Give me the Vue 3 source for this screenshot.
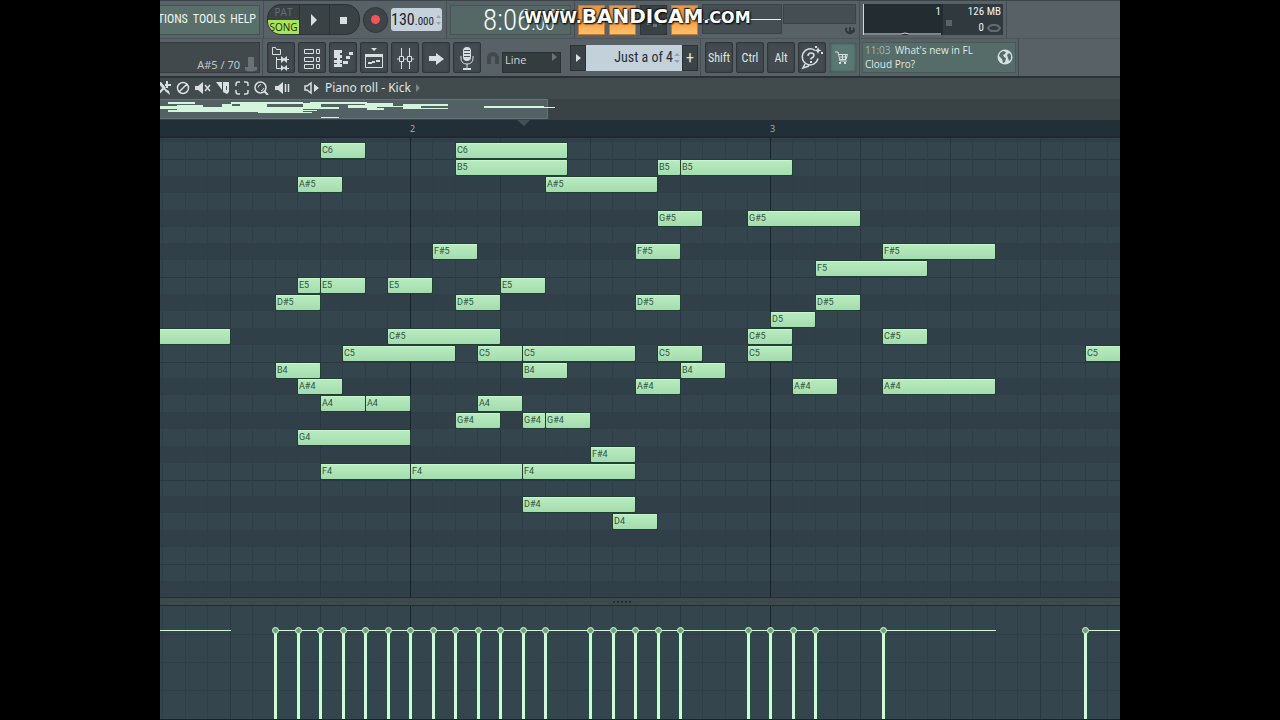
<script setup>
const STEP = 22.5
const ORIGIN = 116
const ROW = 16.87
const NAMES = ['C', 'B', 'A#', 'A', 'G#', 'G', 'F#', 'F', 'E', 'D#', 'D', 'C#']

const score = [
  ['C6', [[2, 2], [8, 5]]],
  ['B5', [[8, 5], [17, 1], [18, 5]]],
  ['A#5', [[1, 2], [12, 5]]],
  ['G#5', [[17, 2], [21, 5]]],
  ['F#5', [[7, 2], [16, 2], [27, 5]]],
  ['F5', [[24, 5]]],
  ['E5', [[1, 1], [2, 2], [5, 2], [10, 2]]],
  ['D#5', [[0, 2], [8, 2], [16, 2], [24, 2]]],
  ['D5', [[22, 2]]],
  ['C#5', [[-7, 5], [5, 5], [21, 2], [27, 2]]],
  ['C5', [[3, 5], [9, 2], [11, 5], [17, 2], [21, 2], [36, 5]]],
  ['B4', [[0, 2], [11, 2], [18, 2]]],
  ['A#4', [[1, 2], [16, 2], [23, 2], [27, 5]]],
  ['A4', [[2, 2], [4, 2], [9, 2]]],
  ['G#4', [[8, 2], [11, 1], [12, 2]]],
  ['G4', [[1, 5]]],
  ['F#4', [[14, 2]]],
  ['F4', [[2, 4], [6, 5], [11, 5]]],
  ['D#4', [[11, 5]]],
  ['D4', [[15, 2]]],
]

const stepX = (k) => Math.floor(ORIGIN + k * STEP)
const rowOf = (name) => {
  const octave = Number(name.slice(-1))
  const i = NAMES.indexOf(name.slice(0, -1))
  return (octave === 6 ? 0 : (5 - octave) * 12 + i) + (octave < 6 && i === 0 ? 12 : 0)
}
const notes = score.flatMap(([name, list]) =>
  list.map(([k, len]) => ({
    name: k < -5 ? '' : name,
    key: name + k,
    style: {
      left: stepX(k) + 'px',
      top: Math.round(5.2 + rowOf(name) * ROW) + 'px',
      width: stepX(k + len) - stepX(k) - 1 + 'px',
    },
  }))
)

const rows = Array.from({ length: 28 }, (_, n) => {
  const i = n - 1
  const name = NAMES[(i + 12) % 12]
  return {
    y: Math.round(4.2 + i * ROW),
    dark: name.includes('#'),
    edge: name === 'B' || name === 'E',
  }
})
const lines = Array.from({ length: 100 }, (_, n) => {
  const k = n - 5
  const kind = (k - 6) % 16 === 0 ? 'measure' : (k - 2) % 4 === 0 ? 'beat' : 'sub'
  return { x: stepX(k) - 0.5, kind }
})
const sticks = [0, 1, 2, 3, 4, 5, 6, 7, 8, 9, 10, 11, 12, 14, 15, 16, 17, 18, 21, 22, 23, 24, 27, 36].map((k) => Math.ceil(ORIGIN + k * STEP))
const sustains = [[-7, -2], [0, 32], [36, 41]].map(([a, b]) => [stepX(a), stepX(b)])

const overview = [
  [8, 1, 27, 2], [0, 5, 17, 3], [8, 9, 10, 2], [17, 4, 26, 4], [17, 9, 36, 2], [17, 8, 90, 1], [35, 4, 8, 3],
  [43, 6, 40, 3], [53, 9, 45, 2], [62, 3, 10, 3], [71, 1, 72, 2], [80, 3, 27, 4], [71, 5, 30, 3],
  [98, 6, 45, 3], [98, 9, 45, 2], [98, 11, 54, 1], [143, 2, 18, 6], [143, 9, 14, 1], [150, 1, 57, 2],
  [161, 6, 18, 2], [188, 4, 29, 3], [205, 2, 28, 2], [215, 4, 18, 2], [207, 7, 17, 2], [233, 5, 10, 1],
  [243, 3, 45, 2], [243, 5, 18, 2], [243, 7, 45, 1], [161, 16, 18, 1], [324, 6, 71, 1], [324, 5, 60, 2],
]
</script>

<template>
  <main class="screen">
    <div class="app">
      <header class="toolbar">
        <div class="bar">
          <nav class="menu">
            <button>OPTIONS</button><button>TOOLS</button><button>HELP</button>
          </nav>
          <i class="rule"></i>
          <div class="transport">
            <button class="mode"><span>PAT</span><b>SONG</b></button>
            <button aria-label="Play"><svg width="28" height="30"><path d="M10 9l6 6-6 6z" /></svg></button>
            <button aria-label="Stop"><svg width="28" height="30"><path d="M9 12h7v7h-7z" /></svg></button>
          </div>
          <button class="record" aria-label="Record"><i></i></button>
          <button class="tempo" aria-label="Tempo"><span>130</span><small>.000</small>
            <svg width="7" height="12"><path d="M1 4l2.500-3 2.500 3zM1 8l2.500 3 2.500-3z" /></svg>
          </button>
          <i class="rule"></i>
          <div class="clock"><span>8:06</span><small>:00</small><em>B:S:T</em></div>
          <i class="rule"></i>
          <div class="toggles">
            <button class="lit" aria-label="Typing keyboard"><svg width="26" height="29"><path d="M4 16h18v3h-18z" /></svg></button>
            <button class="lit" aria-label="Countdown"><svg width="26" height="29"><path d="M11 16h4v4h-4z" /></svg></button>
            <button aria-label="Wait for input"><svg width="26" height="29"><path d="M6 17h4v3h-4zM12 19h4v3h-4zM18 17h3v3h-3z" /></svg></button>
            <button class="lit" aria-label="Loop record"><svg width="26" height="29"><path d="M7 16h4v3h-4zM15 16h4v3h-4z" /></svg></button>
          </div>
          <div class="scopes">
            <div class="scope"><i></i></div>
            <div class="side"><div class="meter"></div>
              <svg width="12" height="9"><path class="ln" d="M3 2a4 3 0 1 0 6 0M6 1v4h4" /></svg>
            </div>
          </div>
          <i class="rule"></i>
          <div class="stats">
            <div class="cpu"><span>1</span><svg width="80" height="3"><path class="ln" d="M0 2h40l4-1 4 1h32" /></svg></div>
            <div class="mem"><span>126 MB</span>
              <div><i></i><span>0</span><svg width="14" height="10"><path class="ln" d="M1 5c2-4 4-3 6-3s4-1 6 3c-2 4-4 3-6 3s-4 1-6-3z" /></svg></div>
            </div>
          </div>
          <i class="rule"></i>
        </div>

        <div class="bar second">
          <div class="hint"><span>A#5 / 70</span>
            <svg width="14" height="16"><path d="M4 1h6v10h3v3q-6 3-12 0v-3h3z" /></svg>
          </div>
          <i class="rule"></i>
          <div class="windows main">
            <button aria-label="Browser"><svg width="28" height="30"><path class="ln" d="M5.500 11.500v-7h3l1 2h4v5zM9.500 14v11.500M9.500 16.500h5M9.500 25.500h5" /><path d="M14 13l3 2.500 3-2.500v7l-3-2.500-3 2.500zM14 22l3 2.500 3-2.500v6l-3-2.500-3 2.500zM20 16h2v1h-2zM20 25h2v1h-2z" /></svg></button>
            <button aria-label="Channel rack"><svg width="28" height="30"><path class="ln" d="M6.500 6.500h9v4h-9zM6.500 14.500h9v4h-9zM6.500 21.500h9v4h-9zM18.500 6.500h3v4h-3zM18.500 14.500h3v4h-3zM18.500 21.500h3v4h-3z" /></svg></button>
            <button aria-label="Piano roll"><svg width="28" height="30"><path d="M5 7h8v3h-2v2h2v3h-2v2h2v3h-2v1h2v3h-8v-3h3v-1h-3v-3h3v-2h-3zM14 18h5v3h-5zM17 13h4v3h-4zM20 9h4v3h-4z" /></svg></button>
            <button aria-label="Playlist"><svg width="28" height="30"><path class="ln" d="M5.500 11.500h17v13h-17z" /><path d="M11 5h6l-3 3zM5 11h18v3h-18zM8 19h4v2h-4zM12 18h3v2h-3zM16 17h4v2h-4z" /></svg></button>
            <button aria-label="Mixer"><svg width="28" height="30"><path class="ln" d="M10.500 5v8M10.500 18v8M18.500 5v8M18.500 18v8M8.500 13.500h4v5h-4zM16.500 13.500h4v5h-4zM6 16h2M13 16h3M21 16h2" /></svg></button>
            <button aria-label="Plugin"><svg width="28" height="30"><path d="M7 13h7v-3l8 6-8 6v-4h-7z" /></svg></button>
            <button aria-label="Microphone"><svg width="28" height="30"><rect x="10" y="4" width="8" height="14" rx="4" /><path class="ln" d="M8 13v2q0 6 6 6t6-6v-2M14 21v5" /><path d="M10 25h8v2h-8z" /><path class="cut" d="M11 7.500h6M11 10.500h6M11 13.500h6" /></svg></button>
          </div>
          <svg class="magnet" width="14" height="16"><path d="M1 14v-6a6 6 0 0 1 12 0v6h-4v-6a2 2 0 0 0-4 0v6z" /></svg>
          <div class="snap">
            <select aria-label="Snap"><option>Line</option></select>
            <svg width="5" height="8"><path d="M0 0l5 4-5 4z" /></svg>
          </div>
          <div class="pattern">
            <button aria-label="Pattern menu"><svg width="5" height="8"><path d="M0 0l5 4-5 4z" /></svg></button>
            <input aria-label="Pattern name" value="Just a of 4" />
            <svg class="spin" width="6" height="12"><path d="M0 4l3-3 3 3zM0 8l3 3 3-3z" /></svg>
            <button aria-label="Add pattern">+</button>
          </div>
          <i class="rule"></i>
          <div class="windows keys">
            <button>Shift</button><button>Ctrl</button><button>Alt</button>
            <button aria-label="Help"><svg width="28" height="30"><path class="ln mid" d="M17 7.500a8 8 0 1 0 3 8M7 21l-2 4 6-2" /><path class="ln mid" d="M10 13q0-3 3-3t3 2.500q0 1.500-3 3v1" /><path d="M12 18h2v2h-2zM20 4l1 2.500 2.500 1-2.500 1-1 2.500-1-2.500-2.500-1 2.500-1zM17 3h2v2h-2zM23 9h2v2h-2z" /></svg></button>
            <button class="shop" aria-label="Shop"><svg width="28" height="30"><path class="ln" d="M6 9h3l2 9h7M10 11.500h8.500l-1.500 5h-6M11 14h7M13.500 11v6M16.500 11v6" /><path d="M10 19h2v2h-2zM15 19h2v2h-2z" /></svg></button>
          </div>
          <i class="rule"></i>
          <a class="news" href="#"><span><time>11:03</time> What's new in FL<br />Cloud Pro?</span>
            <svg width="16" height="16"><circle cx="8" cy="8" r="7.500" /><path class="land" d="M3 4l3-2 3 1-1 2-2 1 1 2 2 1-1 4-2 1-1-4-3-3zM10 6l2-2 2 2 0 4-2 2-1-3z" /></svg>
          </a>
          <i class="rule"></i>
        </div>
      </header>

      <section class="roll">
        <div class="tools">
          <button aria-label="Paint"><svg width="14" height="14"><path d="M1 2l3-1 5 6-2 2zM9 0h2v3h3v2h-3v2h-2v-2h-1v-2h1zM7 7l5 3 1 4-5-4z" /><path class="ln thick" d="M2 12l5-5" /></svg></button>
          <button aria-label="Delete"><svg width="14" height="14"><path class="ln mid" d="M3 11l8-8M12.500 7a5.500 5.500 0 1 1-11 0 5.500 5.500 0 0 1 11 0" /></svg></button>
          <button aria-label="Mute"><svg width="16" height="14"><path d="M0 5h3l5-4v12l-5-4h-3z" /><path class="ln mid" d="M10 4l5 6M15 4l-5 6" /></svg></button>
          <button aria-label="Slice"><svg width="14" height="14"><path d="M0 1h6v8zM7 1h6v10l-2 2-4-2z" /><path class="cut" d="M10.500 5v4" /></svg></button>
          <button aria-label="Select"><svg width="14" height="14"><path class="ln mid" d="M1 5v-2q0-2 2-2h2M9 1h2q2 0 2 2v2M13 9v2q0 2-2 2h-2M5 13h-2q-2 0-2-2v-2" /></svg></button>
          <button aria-label="Zoom"><svg width="16" height="14"><circle class="ln mid" cx="6.500" cy="6.500" r="5.500" /><path class="ln" d="M4 6.500q0-2.500 3-3M7 10q2.500-1 3-3" /><path class="ln thick" d="M10 10l4 4" /></svg></button>
          <button aria-label="Playback"><svg width="16" height="14"><path d="M0 5h3l5-4v12l-5-4h-3z" /><path class="ln mid" d="M10.500 3v8M13.500 3v8" /></svg></button>
          <button class="title"><svg width="16" height="14"><path class="ln mid" d="M1 5h2l4-3v10l-4-3h-2z" /><path d="M10 3l5 4-5 4z" /></svg>
            <span>Piano roll - Kick</span>
            <svg class="dim" width="5" height="8"><path d="M0 0l4 4-4 4z" /></svg>
          </button>
        </div>

        <div class="overview">
          <div class="view"></div>
          <svg><rect v-for="(r, i) in overview" :key="i" :x="r[0]" :y="r[1]" :width="r[2]" :height="r[3]" /></svg>
        </div>

        <div class="ruler">
          <svg>
            <path d="M357 0h13l-6 6z" />
            <text x="250" y="12">2</text>
            <text x="610" y="12">3</text>
          </svg>
        </div>

        <div class="grid">
          <svg>
            <g v-for="r in rows" :key="r.y">
              <rect v-if="r.dark" class="dark" x="0" :y="r.y" width="100%" height="17" />
              <rect v-if="r.edge" class="edge" x="0" :y="r.y" width="100%" height="1" />
            </g>
            <line v-for="l in lines" :key="l.x" :class="l.kind" :x1="l.x" :x2="l.x" y1="0" y2="100%" />
          </svg>
          <div v-for="n in notes" :key="n.key" class="note" :style="n.style">{{ n.name }}</div>
        </div>

        <div class="splitter"><i v-for="n in 5" :key="n"></i></div>

        <div class="velocity">
          <svg>
            <line v-for="l in lines" :key="l.x" :class="l.kind" :x1="l.x" :x2="l.x" y1="0" y2="100%" />
            <line v-for="y in [28, 56, 84]" :key="y" class="sub" x1="0" x2="100%" :y1="y + 0.5" :y2="y + 0.5" />
            <g v-for="x in sticks" :key="x">
              <rect class="shade" :x="x - 3" y="24" width="6" height="100%" />
              <rect class="stick" :x="x - 2" y="24" width="3" height="100%" />
            </g>
            <rect v-for="s in sustains" :key="s[0]" class="stick" :x="s[0]" y="24" :width="s[1] - s[0]" height="1" />
            <circle v-for="x in sticks" :key="x" :cx="x - 0.5" cy="24.500" r="3" />
          </svg>
        </div>
      </section>

      <div class="watermark"><small>WWW.</small><b>BANDICAM</b><small>.COM</small></div>
    </div>
  </main>
</template>

<style>
body { background: #000; }
</style>

<style scoped>
* { box-sizing: border-box; }
.screen { height: 100vh; padding: 0 12.5%; background: #000; font-family: "Open Sans", "Noto Sans", sans-serif; overflow: hidden; }
.app { position: relative; display: flex; flex-direction: column; height: 100%; overflow: hidden; background: #34444d; }
button { margin: 0; padding: 0; border: 0; background: none; color: #dfe5e6; font: inherit; display: flex; align-items: center; justify-content: center; }
svg { display: block; flex: none; fill: #d9dfe1; }
.ln { fill: none; stroke: #d9dfe1; stroke-width: 1; }
.mid { stroke-width: 1.5; }
.thick { stroke-width: 2; }
.cut { fill: none; stroke: #4a5358; stroke-width: 1; }

.toolbar { background: #586266; border-bottom: 2px solid #2b3338; flex: none; }
.bar { display: flex; align-items: center; height: 38px; gap: 3px; border-top: 1px solid #3b4448; }
.bar > * { flex: none; }
.rule { width: 1px; align-self: stretch; background: #454e52; }
.menu { width: 100px; height: 30px; display: flex; justify-content: flex-end; gap: 5px; padding-right: 3px; background: #596f6a; border: 1px solid #47534f; border-left: 0; overflow: hidden; }
.menu button, .tempo, .clock, .stats, .pattern, .keys button { font-family: "Roboto Condensed", "Liberation Sans Narrow", "Open Sans", sans-serif; }
.menu button { font-size: 12px; color: #f0f5f4; padding-bottom: 1px; }
.transport { display: flex; width: 93px; height: 31px; border: 1px solid #2b3236; border-radius: 14px; overflow: hidden; background: #3a4246; }
.transport button { width: 30px; border-left: 1px solid #2b3236; }
.transport .mode { width: 31px; border: 0; flex-direction: column; font-size: 10px; line-height: 15px; }
.mode span { color: #687074; }
.mode b { width: 100%; background: #a9e657; color: #1c2a10; font-weight: 400; line-height: 14px; }
.record { width: 25px; height: 26px; border-radius: 13px; background: #3d4549; border: 1px solid #2e3539; }
.record i { width: 9px; height: 9px; border-radius: 5px; background: #f2545c; }
.tempo { width: 51px; height: 23px; border-radius: 3px; background: #c5d2db; color: #1b2429; font-size: 16px; margin-right: 1px; }
.tempo small { font-size: 11px; align-self: flex-end; line-height: 18px; }
.tempo svg { fill: #98a4ab; margin-left: 1px; }
.clock { position: relative; width: 121px; height: 30px; display: flex; align-items: baseline; padding-left: 32px; background: #556865; border: 1px solid #465552; color: #f4faf9; font-size: 29px; font-weight: 300; line-height: 28px; }
.clock small { font-size: 20px; }
.clock em { position: absolute; left: 100px; top: 1px; font: 6px/8px "Open Sans", sans-serif; }
.toggles { display: flex; gap: 4px; width: 120px; }
.toggles button { width: 27px; height: 30px; background: #3a4145; border: 1px solid #30373b; }
.toggles svg { fill: #6c7478; }
.toggles .lit { background: linear-gradient(#e99747, #f7a145 60%, #ffc26d); border-color: #c57a35; }
.toggles .lit svg { fill: #e58c3a; }
.scopes { display: flex; gap: 1px; margin-left: 1px; width: 154px; }
.scope { width: 80px; height: 30px; background: #454f53; border: 1px solid #3a4347; padding-top: 14px; }
.scope i { display: block; height: 1px; background: #e8efed; }
.side { flex: 1; display: flex; flex-direction: column; align-items: flex-end; gap: 2px; }
.meter { width: 100%; height: 20px; background: #454f53; border: 1px solid #3a4347; }
.side .ln { stroke: #30383c; stroke-width: 2; }
.stats { display: flex; width: 140px; height: 31px; background: #232c31; color: #f0f4f4; font-size: 11px; line-height: 16px; }
.cpu { width: 80px; display: flex; flex-direction: column; justify-content: space-between; align-items: flex-end; border-left: 1px solid #d0d7d8; padding-right: 2px; overflow: hidden; }
.mem { flex: 1; background: #2f393e; text-align: right; padding-right: 2px; }
.mem div { display: flex; align-items: center; justify-content: flex-end; gap: 3px; height: 15px; }
.mem i { width: 6px; height: 6px; background: #59646a; margin-right: 24px; align-self: flex-start; }
.mem .ln { stroke: #606b70; stroke-width: 2; }

.second { gap: 2px; border-top-color: #4c5559; }
.hint { width: 100px; height: 31px; display: flex; align-items: flex-end; justify-content: flex-end; gap: 4px; padding: 0 1px 0 0; background: #42494d; border: 1px solid #353d41; border-left: 0; color: #bfc6c8; font: 11px/14px "Noto Sans", sans-serif; }
.hint svg { fill: #697276; }
.windows { display: flex; gap: 3px; }
.main, .keys { margin-left: 2px; }
.windows button { width: 28px; height: 31px; background: #434b50; border: 1px solid #2e363a; border-radius: 2px; box-shadow: inset 0 0 3px #363e42; }
.magnet { fill: #41494d; margin-left: 3px; }
.snap { position: relative; width: 59px; height: 21px; }
.snap select { width: 100%; height: 100%; appearance: none; background: #343c40; border: 1px solid #2a3135; color: #cfd6d8; font: 11px/14px "Open Sans", sans-serif; padding: 0 3px 5px 2px; }
.snap svg { position: absolute; right: 4px; top: 6px; fill: #6a7377; }
.pattern { position: relative; display: flex; width: 128px; height: 26px; margin-left: 7px; }
.pattern button { width: 16px; background: #3b4347; border: 1px solid #2b3236; font-size: 16px; }
.pattern input { width: 96px; border: 0; background: #c3d1db; color: #263037; text-align: right; padding: 0 9px 1px 0; font: inherit; font-size: 14px; }
.pattern .spin { position: absolute; right: 18px; top: 7px; fill: #94a1a9; }
.keys button { font-size: 12px; }
.windows .shop { background: #5a7872; border-color: #4b625d; }
.news { display: flex; align-items: center; justify-content: space-between; width: 154px; height: 31px; padding: 0 2px 2px; background: #566c68; border: 1px solid #485a56; color: #dfe8e6; text-decoration: none; font-size: 10px; line-height: 14px; }
.news time { color: #a5b5b2; margin-right: 2px; }
.land { fill: #566c68; }

.roll { flex: 1; display: flex; flex-direction: column; min-height: 0; }
.tools { display: flex; align-items: center; gap: 5px; height: 21px; padding-bottom: 1px; background: #414a4d; flex: none; }
.tools button:first-child { width: 11px; overflow: hidden; justify-content: flex-end; }
.tools .title { gap: 5px; margin-left: 8px; font: 12px/16px "Noto Sans", sans-serif; }
.dim { fill: #7d8689; }
.overview { position: relative; height: 21px; background: #3a4245; flex: none; }
.overview .view { width: 388px; max-width: 100%; height: 20px; background: #536064; border: 1px solid #657276; border-left: 0; }
.overview svg { position: absolute; left: 0; top: 2px; width: 100%; height: 19px; fill: #d3f5dc; }
.ruler { height: 18px; background: #222f36; border-bottom: 2px solid #1e2a30; flex: none; }
.ruler svg { width: 100%; height: 16px; fill: #42505a; }
.ruler text { fill: #a9b4b9; font: 9px "Open Sans", sans-serif; }
.grid { position: relative; height: 459px; flex: none; overflow: hidden; background: #35454e; }
.grid > svg, .velocity svg { width: 100%; height: 100%; }
.dark { fill: #303f48; }
.edge { fill: #2a3840; }
line { stroke-width: 1; }
.sub { stroke: #2f3e47; }
.beat { stroke: #283740; }
.measure { stroke: #17222a; }
.note { position: absolute; height: 15px; padding-left: 1px; border-radius: 1px; background: linear-gradient(#b9ecc0, #a4dcae); box-shadow: 0 0 0 1px #1f4032, inset 0 1px #c6f4cc; color: #315440; font: 9px/15px Roboto, "Liberation Sans", sans-serif; overflow: hidden; }
.splitter { height: 9px; display: flex; align-items: center; justify-content: center; gap: 2px; flex: none; padding-right: 36px; background: #3f494b; border: solid #212d34; border-width: 1px 0; }
.splitter i { width: 2px; height: 2px; background: #252e32; }
.velocity { flex: 1; min-height: 60px; background: #35454e; border-bottom: 1px solid #18242a; }
.shade { fill: #25503f; }
.stick { fill: #d2f7dd; }
.velocity circle { fill: #6fa278; stroke: #d2f7dd; stroke-width: 1; }
.tools circle { fill: none; }
.watermark { position: absolute; left: 364px; top: 4px; display: flex; align-items: baseline; color: #fff; font-family: "DejaVu Sans", sans-serif; font-size: 20px; line-height: 24px; font-weight: 700; text-shadow: 0 0 2px #000, 1px 1px 2px #000, -1px -1px 1px #222; }
.watermark small { font-size: 16px; }
</style>
